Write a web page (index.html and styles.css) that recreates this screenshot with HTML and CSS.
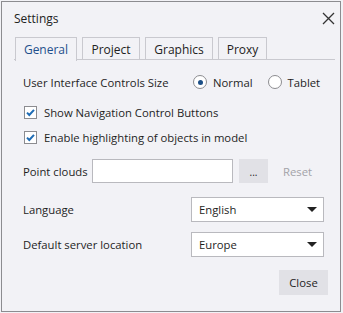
FILE: index.html
```html
<!DOCTYPE html>
<html>
<head>
<meta charset="utf-8">
<link rel="stylesheet" href="styles.css">
</head>
<body>
<div class="window">
  <div class="titlebar">
    <span class="title">Settings</span>
    <svg class="close-x" width="13" height="13" viewBox="0 0 13 13"><path d="M1 1L12 12M12 1L1 12" stroke="#333" stroke-width="1.3" fill="none"/></svg>
  </div>
  <div class="tabs">
    <div class="tab active">General</div>
    <div class="tab">Project</div>
    <div class="tab">Graphics</div>
    <div class="tab">Proxy</div>
  </div>
  <div class="content">
    <div class="row radio-row">
      <span class="label wide">User Interface Controls Size</span>
      <span class="radio checked"></span><span class="radio-text">Normal</span>
      <span class="radio"></span><span class="radio-text">Tablet</span>
    </div>
    <div class="row check-row first">
      <span class="checkbox"><svg width="11" height="11" viewBox="0 0 11 11"><path d="M2 5.6L4.3 8L9 2.8" stroke="#1f6cb5" stroke-width="2" fill="none"/></svg></span>
      <span>Show Navigation Control Buttons</span>
    </div>
    <div class="row check-row">
      <span class="checkbox"><svg width="11" height="11" viewBox="0 0 11 11"><path d="M2 5.6L4.3 8L9 2.8" stroke="#1f6cb5" stroke-width="2" fill="none"/></svg></span>
      <span>Enable highlighting of objects in model</span>
    </div>
    <div class="row pc-row">
      <span class="label pc">Point clouds</span>
      <span class="input"></span>
      <span class="btn dots">...</span>
      <span class="reset">Reset</span>
    </div>
    <div class="row sel-row lang">
      <span class="label sel">Language</span>
      <span class="select"><span>English</span><span class="arrow"></span></span>
    </div>
    <div class="row sel-row server">
      <span class="label sel">Default server location</span>
      <span class="select"><span>Europe</span><span class="arrow"></span></span>
    </div>
    <div class="footer">
      <span class="btn close">Close</span>
    </div>
  </div>
</div>
</body>
</html>
```
FILE: styles.css
```css
* { box-sizing: border-box; }
html, body { margin: 0; padding: 0; }
body {
  background: #f2f2f6;
  font-family: "Open Sans", "Noto Sans", sans-serif;
  font-size: 11.3px;
  color: #1e1e1e;
}
.window {
  margin: 1px 0 0 1px;
  width: 340px;
  height: 311px;
  border: 1px solid #8c8c90;
  background: #f2f2f6;
}
.titlebar {
  height: 35px;
  display: flex;
  align-items: center;
  justify-content: space-between;
  padding: 0 5px 2px 12px;
}
.title { font-size: 12px; color: #222; }
.tabs {
  display: flex;
  gap: 5px;
  margin: 0 5px 0 12px;
  border-bottom: 1px solid #c9c9cf;
  height: 23px;
  padding-left: 1px;
}
.tab {
  height: 23px;
  border: 1px solid #c9c9cf;
  border-bottom: none;
  display: flex;
  align-items: center;
  justify-content: center;
  color: #222;
  font-size: 12px;
}
.tab:nth-child(1) { width: 62px; }
.tab:nth-child(2) { width: 58px; }
.tab:nth-child(3) { width: 68px; }
.tab:nth-child(4) { width: 49px; }
.tab.active {
  color: #1d4f8c;
  background: #f2f2f6;
  height: 24px;
}
.content {
  padding: 0 12px 0 21px;
  display: flex;
  flex-direction: column;
}
.row { display: flex; align-items: center; }
.radio-row { height: 20px; margin-top: 12px; }
.label.wide { width: 170px; flex: none; }
.radio {
  width: 14px; height: 14px;
  flex: none;
  border: 1px solid #8c8c90;
  border-radius: 50%;
  background: #fff;
  display: flex; align-items: center; justify-content: center;
}
.radio.checked::after {
  content: "";
  width: 5px; height: 5px;
  border-radius: 50%;
  background: #1c4f86;
}
.radio-text { margin-left: 6px; margin-right: 15px; }
.check-row { height: 20px; margin-top: 5px; }
.check-row.first { margin-top: 10px; }
.checkbox {
  width: 13px; height: 13px;
  flex: none;
  border: 1px solid #8c8c90;
  background: #fff;
  margin: 0 7px 0 1px;
  display: flex; align-items: center; justify-content: center;
}
.pc-row { height: 24px; margin-top: 12px; }
.label.pc { width: 69px; flex: none; }
.input {
  width: 141px; height: 24px;
  background: #fff;
  border: 1px solid #b9b9be;
}
.btn {
  background: #e1e1e6;
  display: flex; align-items: center; justify-content: center;
}
.dots { width: 29px; height: 24px; margin-left: 6px; font-size: 10px; padding-top: 2px; }
.reset { margin-left: 15px; color: #a2a2a8; }
.sel-row { height: 25px; }
.sel-row.lang { margin-top: 14px; }
.sel-row.server { margin-top: 10px; }
.label.sel { width: 168px; flex: none; }
.select {
  width: 133px; height: 25px;
  background: #fff;
  border: 1px solid #b9b9be;
  display: flex; align-items: center; justify-content: space-between;
  padding: 0 6px 0 7px;
}
.arrow {
  width: 0; height: 0;
  border-left: 5px solid transparent;
  border-right: 5px solid transparent;
  border-top: 5px solid #222;
}
.footer { display: flex; justify-content: flex-end; margin-top: 13px; }
.close { width: 49px; height: 25px; }
```
